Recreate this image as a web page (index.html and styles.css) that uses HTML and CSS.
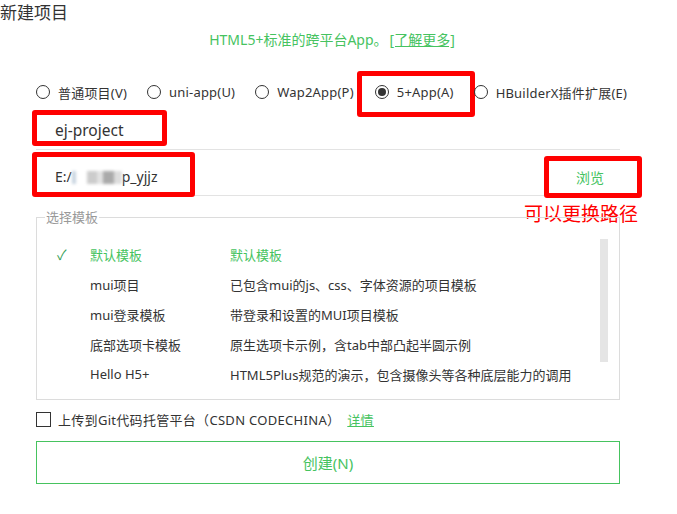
FILE: index.html
```html
<!DOCTYPE html>
<html lang="zh-CN">
<head>
    <meta charset="UTF-8">
    <title>新建项目</title>
    <link rel="stylesheet" href="styles.css">
</head>
<body>
    <h1 class="title">新建项目</h1>

    <div class="form">
        <p class="intro">HTML5+标准的跨平台App。<a href="#" class="link">[了解更多]</a></p>

        <!-- project types -->
        <div class="types">
            <label class="type"><span class="radio"></span>普通项目(V)</label>
            <label class="type"><span class="radio"></span>uni-app(U)</label>
            <label class="type"><span class="radio"></span>Wap2App(P)</label>
            <label class="type type-marked"><span class="radio checked"></span>5+App(A)<span class="mark mark-type"></span></label>
            <label class="type"><span class="radio"></span>HBuilderX插件扩展(E)</label>
        </div>

        <div class="field field-name">
            <span class="value">ej-project</span>
            <span class="mark mark-name"></span>
        </div>

        <div class="path-row">
            <div class="field field-path">
                <span class="value">E:/<span class="blur"></span>p_yjjz</span>
                <span class="mark mark-path"></span>
            </div>
            <div class="browse">
                浏览
                <span class="mark mark-browse"></span>
                <span class="note">可以更换路径</span>
            </div>
        </div>

        <fieldset class="templates">
            <legend>选择模板</legend>
            <div class="tpl-list">
                <div class="tpl active"><span class="tick">✓</span><span class="tpl-name">默认模板</span><span class="tpl-desc">默认模板</span></div>
                <div class="tpl"><span class="tick"></span><span class="tpl-name">mui项目</span><span class="tpl-desc">已包含mui的js、css、字体资源的项目模板</span></div>
                <div class="tpl"><span class="tick"></span><span class="tpl-name">mui登录模板</span><span class="tpl-desc">带登录和设置的MUI项目模板</span></div>
                <div class="tpl"><span class="tick"></span><span class="tpl-name">底部选项卡模板</span><span class="tpl-desc">原生选项卡示例，含tab中部凸起半圆示例</span></div>
                <div class="tpl"><span class="tick"></span><span class="tpl-name">Hello H5+</span><span class="tpl-desc">HTML5Plus规范的演示，包含摄像头等各种底层能力的调用</span></div>
            </div>
            <div class="scrollbar"></div>
        </fieldset>

        <label class="git">
            <span class="checkbox"></span>上传到Git代码托管平台（CSDN CODECHINA）<a href="#" class="link detail">详情</a>
        </label>

        <button class="create">创建(N)</button>
    </div>
</body>
</html>
```

FILE: styles.css
```css
body {
    margin: 0;
    background: #fff;
    color: #333;
    font-family: "Noto Sans", "Noto Sans CJK SC", sans-serif;
    font-size: 13px;
}

.title {
    margin: 0;
    padding-top: 1px;
    font-size: 17px;
    font-weight: 400;
    line-height: 24px;
}

.form {
    width: 584px;
    margin-left: 36px;
}

.intro {
    margin: 5px 0 0;
    text-align: center;
    color: #46c35f;
    font-size: 14px;
    line-height: 20px;
    padding-left: 8px;
}

.link {
    color: #46c35f;
    text-decoration: underline;
    margin-left: 2px;
}

/* project types */
.types {
    display: flex;
    align-items: center;
    gap: 20px;
    margin-top: 30px;
    height: 24px;
    white-space: nowrap;
    letter-spacing: 0.2px;
}

.type {
    position: relative;
    display: flex;
    align-items: center;
    gap: 8px;
}

.radio {
    width: 12px;
    height: 12px;
    border: 1.5px solid #333;
    border-radius: 50%;
    position: relative;
    flex-shrink: 0;
}

.radio.checked::after {
    content: "";
    position: absolute;
    left: 2px;
    top: 2px;
    width: 8px;
    height: 8px;
    border-radius: 50%;
    background: #333;
}

.type-marked {
    margin-left: 1px;
}

/* red annotation frames */
.mark {
    position: absolute;
    border: 5px solid #ff0000;
    border-radius: 3px;
    pointer-events: none;
}

.mark-type {
    left: -18px;
    top: -12px;
    width: 108px;
    height: 36px;
}

.field {
    position: relative;
    display: flex;
    align-items: center;
    box-sizing: border-box;
    border-bottom: 1px solid #e3e3e3;
    padding-left: 19px;
    font-size: 14px;
}

.field-name {
    height: 39px;
    margin-top: 7px;
    font-size: 15.5px;
}

.mark-name {
    left: -4px;
    top: -1px;
    width: 125px;
    height: 26px;
}

.path-row {
    display: flex;
    align-items: flex-end;
}

.field-path {
    width: 508px;
    height: 46px;
    padding-top: 8px;
    flex-shrink: 0;
}

.mark-path {
    left: -4px;
    top: 2px;
    width: 153px;
    height: 35px;
}

.blur {
    display: inline-block;
    width: 50px;
    height: 13px;
    vertical-align: -2px;
    background: linear-gradient(90deg, #c8d4e0 0 8%, #fff 8% 30%, #ccc 30% 50%, #e2e2e2 50% 62%, #aaa 62% 84%, #ddd 84%);
    filter: blur(1.5px);
}

.browse {
    position: relative;
    flex-shrink: 0;
    width: 90px;
    height: 42px;
    margin-left: 1px;
    margin-bottom: -2px;
    display: flex;
    align-items: center;
    justify-content: center;
    color: #46c35f;
    font-size: 14px;
}

.mark-browse {
    left: -1px;
    top: 0;
    width: 88px;
    height: 32px;
}

.note {
    position: absolute;
    left: -21px;
    top: 46px;
    color: #ff0000;
    font-size: 19px;
    white-space: nowrap;
    line-height: 24px;
}

/* templates */
.templates {
    position: relative;
    margin: 14px 0 0;
    padding: 15px 0 14px;
    border: 1px solid #dcdcdc;
    height: 159px;
}

.templates legend {
    margin-left: 8px;
    padding: 0 1px;
    color: #999;
    line-height: 14px;
}

.tpl {
    display: flex;
    align-items: center;
    height: 30px;
    white-space: nowrap;
}

.tpl.active {
    color: #46c35f;
}

.tick {
    width: 53px;
    padding-left: 20px;
    box-sizing: border-box;
    color: #3aa05a;
    font-size: 14px;
}

.tpl-name {
    width: 140px;
}

.scrollbar {
    position: absolute;
    right: 11px;
    top: 15px;
    width: 8px;
    height: 123px;
    background: #e5e5e5;
}

.git {
    display: flex;
    align-items: center;
    gap: 7px;
    margin-top: 9px;
    height: 20px;
    letter-spacing: 0.3px;
}

.checkbox {
    width: 13px;
    height: 13px;
    border: 1.5px solid #333;
}

.detail {
    margin-left: 0;
}

.create {
    display: block;
    width: 584px;
    height: 43px;
    margin-top: 12px;
    background: #fff;
    border: 1px solid #46c35f;
    color: #46c35f;
    font-family: inherit;
    font-size: 15px;
}
```
